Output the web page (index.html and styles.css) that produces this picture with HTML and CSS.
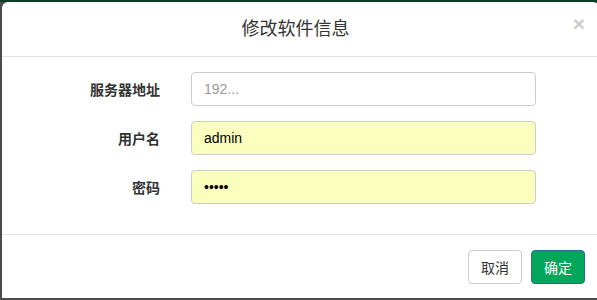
FILE: index.html
```html
<!DOCTYPE html>
<html lang="zh-CN">
<head>
    <meta charset="UTF-8">
    <title>修改软件信息</title>
    <link rel="stylesheet" href="styles.css">
</head>
<body>
    <div class="topbar"></div>
    <div class="modal">
        <div class="modal-header">
            <button class="close" type="button">&times;</button>
            <h4 class="modal-title">修改软件信息</h4>
        </div>

        <div class="modal-body">
            <form class="form-grid">
                <label for="server">服务器地址</label>
                <input type="text" id="server" class="form-control" placeholder="192...">

                <label for="username">用户名</label>
                <input type="text" id="username" class="form-control autofill" value="admin">

                <label for="password">密码</label>
                <input type="password" id="password" class="form-control autofill" value="admin">
            </form>
        </div>

        <div class="modal-footer">
            <button class="btn btn-default" type="button">取消</button>
            <button class="btn btn-success" type="button">确定</button>
        </div>
    </div>
</body>
</html>
```

FILE: styles.css
```css
/* Modal over a dimmed page */
html, body {
    margin: 0;
    height: 100%;
    overflow: hidden;
}

body {
    background-color: #4b4b4b;
    font-family: "Helvetica Neue", "Liberation Sans", "Noto Sans CJK SC", sans-serif;
    font-size: 14px;
    color: #333;
}

.topbar {
    height: 2px;
    background-color: #0a3f26;
}

.modal {
    margin-left: 2px;
    width: 597px;
    background-color: #fff;
    border-radius: 6px 6px 0 0;
}

.modal-header {
    position: relative;
    padding: 14px 15px;
    border-bottom: 1px solid #e5e5e5;
}

.modal-title {
    margin: 0;
    padding-right: 10px;
    font-size: 18px;
    font-weight: normal;
    line-height: 26px;
    text-align: center;
    color: #333;
}

.close {
    position: absolute;
    right: 14px;
    top: 11px;
    padding: 0;
    border: none;
    background: transparent;
    font-family: "Liberation Sans", sans-serif;
    font-size: 21px;
    font-weight: bold;
    line-height: 21px;
    color: #000;
    opacity: 0.2;
    cursor: pointer;
}

.modal-body {
    padding: 15px 15px 30px;
}

.form-grid {
    display: grid;
    grid-template-columns: 143px 345px;
    column-gap: 31px;
    row-gap: 15px;
    align-items: center;
    margin: 0;
}

.form-grid label {
    text-align: right;
    font-weight: bold;
    color: #333;
}

.form-control {
    height: 34px;
    padding: 6px 12px;
    box-sizing: border-box;
    border: 1px solid #ccc;
    border-radius: 4px;
    background-color: #fff;
    font-family: "Liberation Sans", "Noto Sans CJK SC", sans-serif;
    font-size: 14px;
    color: #000;
    outline: none;
}

.form-control::placeholder {
    color: #999;
}

.autofill {
    background-color: #faffbd;
}

.modal-footer {
    display: flex;
    justify-content: flex-end;
    gap: 9px;
    padding: 15px 14px 14px;
    border-top: 1px solid #e5e5e5;
}

.btn {
    height: 34px;
    padding: 6px 12px;
    border: 1px solid transparent;
    border-radius: 4px;
    font-family: "Noto Sans CJK SC", sans-serif;
    font-size: 14px;
    line-height: 20px;
    cursor: pointer;
}

.btn-default {
    background-color: #fff;
    border-color: #ccc;
    color: #333;
}

.btn-success {
    background-color: #00a65a;
    border-color: #2b6c8f;
    color: #fff;
}
```
